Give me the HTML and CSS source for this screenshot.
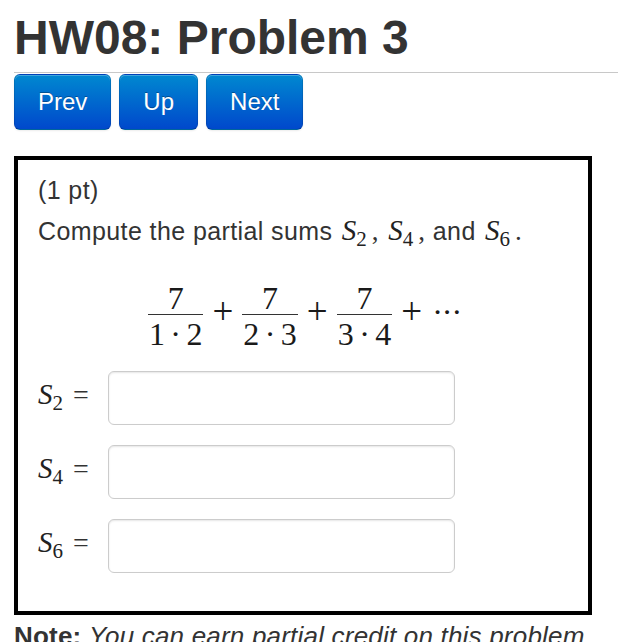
FILE: index.html
```html
<!DOCTYPE html>
<html>
<head>
<meta charset="utf-8">
<title>HW08: Problem 3</title>
<link rel="stylesheet" href="styles.css">
</head>
<body>
<div class="page">
  <h1 class="title">HW08: Problem 3</h1>
  <div class="nav">
    <a class="btn">Prev</a>
    <a class="btn">Up</a>
    <a class="btn">Next</a>
  </div>
  <div class="problem">
    <div class="pts">(1 pt)</div>
    <div class="stmt">Compute the partial sums <span class="m"><i>S</i><sub>2</sub></span><span class="pc">,</span> <span class="m"><i>S</i><sub>4</sub></span><span class="pc">,</span> and <span class="m"><i>S</i><sub>6</sub></span><span class="pc">.</span></div>
    <div class="display">
      <span class="frac"><span class="num">7</span><span class="den">1<span class="dot">·</span>2</span></span>
      <span class="op">+</span>
      <span class="frac"><span class="num">7</span><span class="den">2<span class="dot">·</span>3</span></span>
      <span class="op">+</span>
      <span class="frac"><span class="num">7</span><span class="den">3<span class="dot">·</span>4</span></span>
      <span class="op">+</span>
      <span class="dots">···</span>
    </div>
    <div class="answers">
      <div class="row">
        <span class="lbl"><span class="m"><i>S</i><sub>2</sub></span><span class="eq">=</span></span>
        <input class="ans" type="text">
      </div>
      <div class="row">
        <span class="lbl"><span class="m"><i>S</i><sub>4</sub></span><span class="eq">=</span></span>
        <input class="ans" type="text">
      </div>
      <div class="row">
        <span class="lbl"><span class="m"><i>S</i><sub>6</sub></span><span class="eq">=</span></span>
        <input class="ans" type="text">
      </div>
    </div>
  </div>
  <div class="note"><b>Note:</b> <i>You can earn partial credit on this problem.</i></div>
</div>
</body>
</html>
```
FILE: styles.css
```css
html, body {
  margin: 0;
  padding: 0;
  background: #fff;
}
body {
  font-family: "Liberation Sans", Arial, Helvetica, sans-serif;
  color: #333;
  overflow: hidden;
}
.page {
  margin-left: 14px;
}
.title {
  margin: 11px 0 0;
  padding: 0 0 8px;
  font-size: 48px;
  line-height: 53px;
  font-weight: bold;
  color: #333;
  border-bottom: 1px solid #c8c8c8;
}
.nav {
  display: flex;
  gap: 8px;
  margin-top: 1px;
}
.btn {
  display: block;
  padding: 12px 23px;
  font-size: 24px;
  line-height: 30px;
  color: #fff;
  background: linear-gradient(to bottom, #0088d0, #0048cc);
  border: 1px solid;
  border-color: rgba(0,0,0,.1) rgba(0,0,0,.1) rgba(0,0,0,.25);
  border-radius: 6px;
  box-shadow: inset 0 1px 0 rgba(255,255,255,.25), 0 1px 2px rgba(0,0,0,.08);
  text-shadow: 0 -1px 0 rgba(0,0,0,.3);
}
.problem {
  width: 578px;
  box-sizing: border-box;
  margin-top: 26px;
  border: 4px solid #000;
  padding: 12px 20px 38px;
  font-size: 25px;
  line-height: 36px;
  letter-spacing: 0.4px;
}
.stmt {
  margin-top: 4px;
}
.m {
  font-family: "Liberation Serif", "Times New Roman", serif;
  font-size: 29px;
  letter-spacing: 0;
  margin-left: 2px;
  color: #222;
}
.m i {
  font-style: italic;
}
.m sub {
  font-size: 21px;
  line-height: 0;
  vertical-align: -6px;
}
.pc {
  font-family: "Liberation Serif", "Times New Roman", serif;
  font-size: 27px;
  margin-left: 5px;
}
.display {
  display: flex;
  justify-content: center;
  align-items: center;
  height: 73px;
  margin-top: 29px;
  font-family: "Liberation Serif", "Times New Roman", serif;
  font-size: 32px;
  letter-spacing: 0;
  color: #1a1a1a;
}
.frac {
  display: flex;
  flex-direction: column;
  text-align: center;
  margin: 0 3px;
}
.num {
  padding: 5px 2px 0;
  line-height: 31px;
}
.den {
  border-top: 1px solid #333;
  padding: 4px 1px 1px;
  line-height: 31px;
}
.dot {
  margin: 0 0.17em;
}
.op {
  margin: 0 6px;
  padding-bottom: 6px;
  font-size: 37px;
  line-height: 31px;
}
.dots {
  margin-left: 4px;
  padding-bottom: 5px;
  line-height: 31px;
  letter-spacing: -1px;
}
.answers {
  margin-top: 20px;
  display: flex;
  flex-direction: column;
  gap: 20px;
}
.row {
  display: flex;
  align-items: center;
}
.lbl {
  display: flex;
  align-items: baseline;
  line-height: 36px;
  padding-bottom: 8px;
  font-family: "Liberation Serif", "Times New Roman", serif;
  font-size: 28px;
  letter-spacing: 0;
}
.lbl .m {
  margin-left: 0;
}
.eq {
  margin-left: 10px;
}
.ans {
  display: block;
  margin: 0 0 0 19px;
  width: 347px;
  height: 54px;
  box-sizing: border-box;
  border: 1px solid #ccc;
  border-radius: 6px;
  background: #fff;
  box-shadow: inset 0 1px 2px rgba(0,0,0,.1);
  padding: 0;
}
.note {
  margin-top: 3px;
  font-size: 26px;
  line-height: 36px;
  letter-spacing: 0.2px;
  color: #333;
}
```
